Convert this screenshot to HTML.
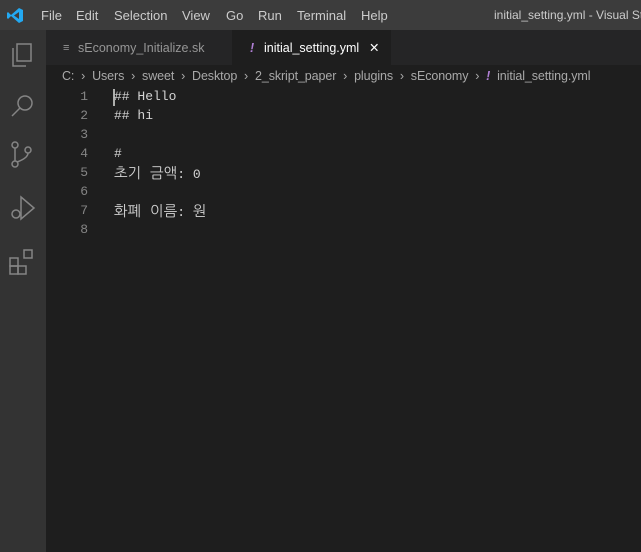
<!DOCTYPE html>
<html><head><style>
body{margin:0;width:641px;height:552px;background:#1e1e1e;font-family:"Liberation Sans",sans-serif;overflow:hidden;position:relative}
.title{position:absolute;left:0;top:0;width:641px;height:30px;background:#3c3c3c;color:#ccc;font-size:13px;white-space:nowrap;overflow:hidden}
.title span{position:absolute;top:8px}
.act{position:absolute;left:0;top:30px;width:46px;height:522px;background:#333}
.tabs{position:absolute;left:46px;top:30px;width:595px;height:35px;background:#252526}
.tab{position:absolute;top:0;height:35px;font-size:12.5px;line-height:37px;white-space:nowrap}
.bc{position:absolute;left:62px;top:69px;font-size:12.5px;color:#a9a9a9;white-space:pre;letter-spacing:-0.1px;word-spacing:3.5px}
.ed{position:absolute;left:0;top:88px;font-family:"Liberation Mono","NanumGothic",monospace;font-size:13px;color:#d4d4d4}
.ln{position:absolute;left:60px;width:28px;text-align:right;color:#858585}
.tx{position:absolute;left:114px;white-space:pre}
.k{font-size:14.5px}
</style></head><body>
<div class="title">
<svg style="position:absolute;left:7px;top:7px" width="17" height="17" viewBox="0 0 17 17"><path d="M12 1 L16 3 V14 L12 16 L4 9 L1 12 L0 11 V6 L1 5 L4 8 L12 1 Z M12 5 L7 8.5 L12 12 Z" fill="#23a9f2"/></svg>
<span style="left:41px">File</span><span style="left:76px">Edit</span><span style="left:114px">Selection</span><span style="left:182px">View</span><span style="left:226px">Go</span><span style="left:258px">Run</span><span style="left:297px">Terminal</span><span style="left:361px">Help</span>
<span style="left:494px;font-size:12px">initial_setting.yml - Visual St</span>
</div>
<div class="act">
<svg width="46" height="260" style="position:absolute;top:0" fill="none" stroke="#858585" stroke-width="1.5">
<rect x="17" y="14" width="14" height="17"/><path d="M13 18 V36 H26"/>
<circle cx="25" cy="73" r="7"/><path d="M20 78 L12 86"/>
<circle cx="15" cy="115" r="3"/><circle cx="15" cy="134" r="3"/><circle cx="28" cy="120" r="3"/><path d="M15 118 V131 M28 123 Q28 128 17 132"/>
<path d="M21 167 L34 178 L21 189 Z"/><circle cx="16" cy="184" r="4"/>
<rect x="10" y="228" width="8" height="8"/><rect x="10" y="236" width="8" height="8"/><rect x="18" y="236" width="8" height="8"/><rect x="24" y="220" width="8" height="8"/>
</svg>
</div>
<div class="tabs">
<div class="tab" style="left:0;width:186px;color:#969696"><span style="position:absolute;left:17px;font-size:11px">≡</span><span style="position:absolute;left:32px">sEconomy_Initialize.sk</span></div>
<div class="tab" style="left:186px;width:159px;background:#1e1e1e;color:#fff"><span style="position:absolute;left:18px;color:#b180d7;font-style:italic;font-weight:bold">!</span><span style="position:absolute;left:32px">initial_setting.yml</span><span style="position:absolute;left:137px">✕</span></div>
</div>
<div class="bc">C: › Users › sweet › Desktop › 2_skript_paper › plugins › sEconomy › <span style="color:#b180d7;font-style:italic;font-weight:bold">!</span> initial_setting.yml</div>
<div class="ed">
<div style="position:absolute;left:113px;top:1px;width:2px;height:17px;background:#aeafad"></div>
<div class="ln" style="top:1px">1</div><div class="tx" style="top:1px">## Hello</div>
<div class="ln" style="top:20px">2</div><div class="tx" style="top:20px">## hi</div>
<div class="ln" style="top:39px">3</div>
<div class="ln" style="top:58px">4</div><div class="tx" style="top:58px">#</div>
<div class="ln" style="top:77px">5</div><div class="tx" style="top:77px"><span class="k">초기 금액</span>: 0</div>
<div class="ln" style="top:96px">6</div>
<div class="ln" style="top:115px">7</div><div class="tx" style="top:115px"><span class="k">화폐 이름</span>: <span class="k">원</span></div>
<div class="ln" style="top:134px">8</div>
</div>
</body></html>
